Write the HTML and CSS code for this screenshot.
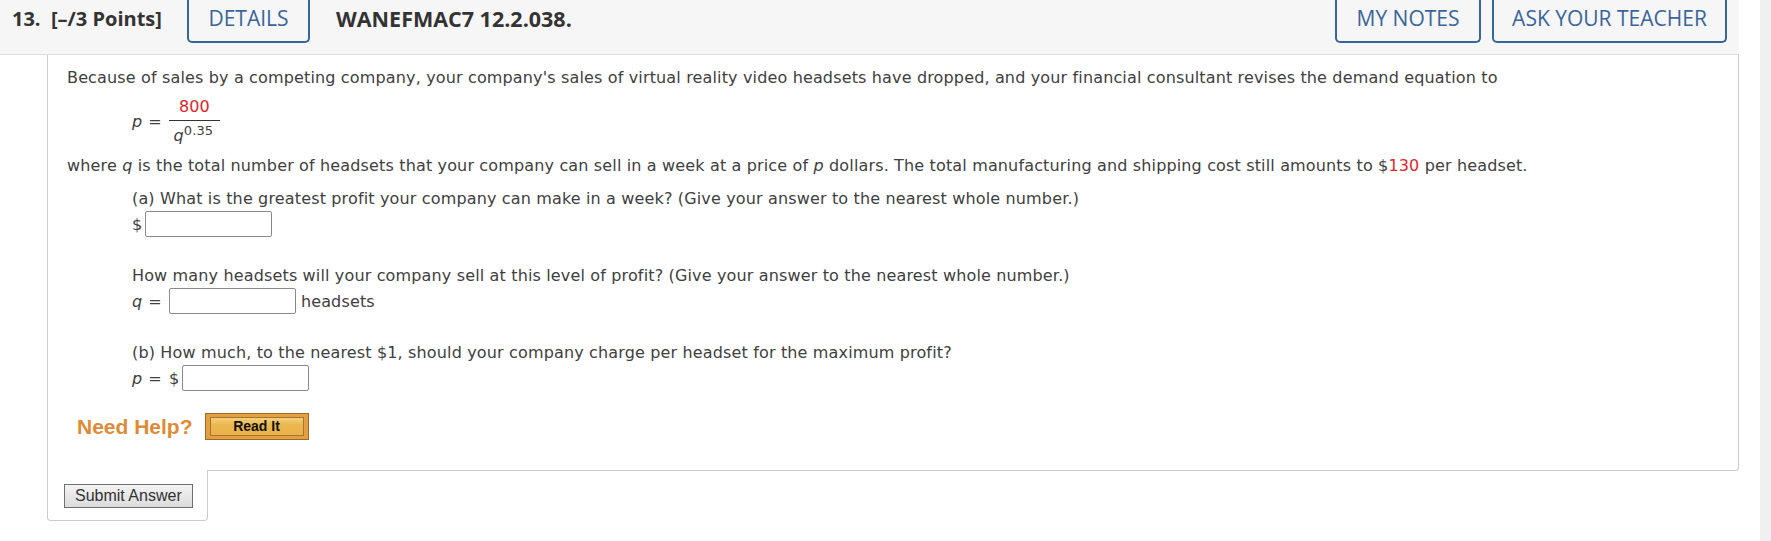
FILE: index.html
```html
<!DOCTYPE html>
<html>
<head>
<meta charset="utf-8">
<link rel="stylesheet" href="styles.css">
</head>
<body>
<div class="page">
  <div class="main">
    <div class="header">
      <div class="qnum">13.&nbsp; [–/3 Points]</div>
      <div class="btn details">DETAILS</div>
      <div class="qid">WANEFMAC7 12.2.038.</div>
      <div class="spacer"></div>
      <div class="btn notes">MY NOTES</div>
      <div class="btn ask">ASK YOUR TEACHER</div>
    </div>
    <div class="card">
      <p class="intro">Because of sales by a competing company, your company's sales of virtual reality video headsets have dropped, and your financial consultant revises the demand equation to</p>
      <div class="formula">
        <span class="var">p</span><span class="eq">=</span>
        <span class="frac">
          <span class="num red">800</span>
          <span class="den"><span class="var">q</span><sup>0.35</sup></span>
        </span>
      </div>
      <p class="where">where <span class="var">q</span> is the total number of headsets that your company can sell in a week at a price of <span class="var">p</span> dollars. The total manufacturing and shipping cost still amounts to $<span class="red">130</span> per headset.</p>
      <div class="part">
        <div class="qline">(a) What is the greatest profit your company can make in a week? (Give your answer to the nearest whole number.)</div>
        <div class="aline"><span class="pre">$</span><span class="box"></span></div>
      </div>
      <div class="part">
        <div class="qline">How many headsets will your company sell at this level of profit? (Give your answer to the nearest whole number.)</div>
        <div class="aline"><span class="var">q</span><span class="eq">=</span><span class="box"></span><span class="post">headsets</span></div>
      </div>
      <div class="part">
        <div class="qline">(b) How much, to the nearest $1, should your company charge per headset for the maximum profit?</div>
        <div class="aline"><span class="var">p</span><span class="eq">=</span><span class="pre">$</span><span class="box"></span></div>
      </div>
      <div class="help">
        <span class="needhelp">Need Help?</span>
        <span class="readit"><span class="readit-inner">Read It</span></span>
      </div>
    </div>
    <div class="submit-tab">
      <span class="submit">Submit Answer</span>
    </div>
  </div>
  <div class="gap"></div>
  <div class="strip"></div>
</div>
</body>
</html>
```
FILE: styles.css
```css
html, body {
  margin: 0;
  padding: 0;
  background: #fff;
}
.page {
  display: flex;
  height: 541px;
  overflow: hidden;
}
.main {
  width: 1739px;
  flex: 0 0 1739px;
}
.gap {
  flex: 0 0 21px;
}
.strip {
  flex: 1;
  background: #f0f0f0;
}
.header {
  height: 54px;
  background: #f6f6f6;
  border-bottom: 1px solid #dedede;
  display: flex;
  align-items: flex-start;
  font-family: "Open Sans", sans-serif;
  font-size: 21px;
  color: #333;
}
.qnum {
  font-weight: 700;
  font-size: 20px;
  padding-left: 12px;
  line-height: 38px;
  width: 175px;
}
.btn {
  height: 43px;
  box-sizing: border-box;
  border: 2px solid #3a659b;
  border-top: none;
  border-radius: 0 0 5px 5px;
  color: #3a659b;
  line-height: 37px;
  text-align: center;
  background: #f6f6f6;
}
.details {
  width: 123px;
}
.qid {
  font-weight: 700;
  font-size: 21.5px;
  line-height: 38px;
  padding-left: 26px;
}
.spacer {
  flex: 1;
}
.notes {
  width: 146px;
  margin-right: 11px;
}
.ask {
  width: 235px;
  margin-right: 12px;
}
.card {
  border: 1px solid #cccccc;
  border-top: none;
  margin-left: 47px;
  border-radius: 0 0 4px 0;
  padding: 12px 19px 0 19px;
  font-family: "DejaVu Sans", Verdana, sans-serif;
  font-size: 16px;
  letter-spacing: 0.15px;
  color: #404040;
  height: 416px;
  box-sizing: border-box;
}
.intro, .where {
  margin: 0;
  line-height: 22px;
}
.red {
  color: #e1262b;
}
.var {
  font-style: italic;
}
.formula {
  display: flex;
  align-items: center;
  margin-left: 65px;
  height: 48px;
  margin-top: 8px;
  margin-bottom: 10px;
}
.eq {
  margin: 0 7px 0 6px;
}
.frac {
  display: inline-flex;
  flex-direction: column;
  align-items: center;
  padding-top: 2px;
}
.num {
  border-bottom: 1px solid #333;
  padding: 0 10px 3px;
  line-height: 20px;
}
.den {
  line-height: 22px;
  padding-top: 4px;
  padding-right: 2px;
}
.den sup {
  font-size: 13px;
  vertical-align: 6px;
  line-height: 0;
}
.where {
  margin-bottom: 11px;
}
.part {
  margin-left: 65px;
  margin-bottom: 27px;
}
.qline {
  line-height: 22px;
}
.aline {
  display: flex;
  align-items: center;
  height: 28px;
}
.pre {
  margin-right: 3px;
}
.box {
  width: 127px;
  height: 26px;
  box-sizing: border-box;
  border: 1px solid #8a8a8a;
  border-radius: 2px;
  background: #fff;
}
.post {
  margin-left: 5px;
}
.help {
  display: flex;
  align-items: center;
  margin-left: 10px;
  margin-top: -6px;
}
.needhelp {
  font-family: "Liberation Sans", Arial, sans-serif;
  font-weight: 700;
  font-size: 21px;
  letter-spacing: 0;
  color: #de8a37;
}
.readit {
  margin-left: 12px;
  display: inline-block;
  background: #e3a042;
  border: 1px solid #9e6a2c;
  padding: 3px 4px;
}
.readit-inner {
  display: block;
  width: 92px;
  height: 17px;
  background: linear-gradient(#f5d07a, #ebb84f 40%, #e9b24a);
  border: 1px solid #a9742f;
  font-family: "Liberation Sans", Arial, sans-serif;
  font-weight: 700;
  font-size: 14px;
  letter-spacing: 0;
  color: #111;
  text-align: center;
  line-height: 17px;
}
.submit-tab {
  margin-left: 47px;
  width: 161px;
  height: 51px;
  box-sizing: border-box;
  border: 1px solid #cccccc;
  border-top: none;
  border-radius: 0 0 4px 4px;
  margin-top: -1px;
  background: #fff;
  position: relative;
  padding: 14px 0 0 16px;
}
.submit {
  display: inline-block;
  font-family: "Liberation Sans", Arial, sans-serif;
  font-size: 16px;
  color: #333;
  border: 1px solid #707070;
  background: linear-gradient(#f3f3f3, #dcdcdc);
  padding: 1px 10px;
  line-height: 20px;
}
```
